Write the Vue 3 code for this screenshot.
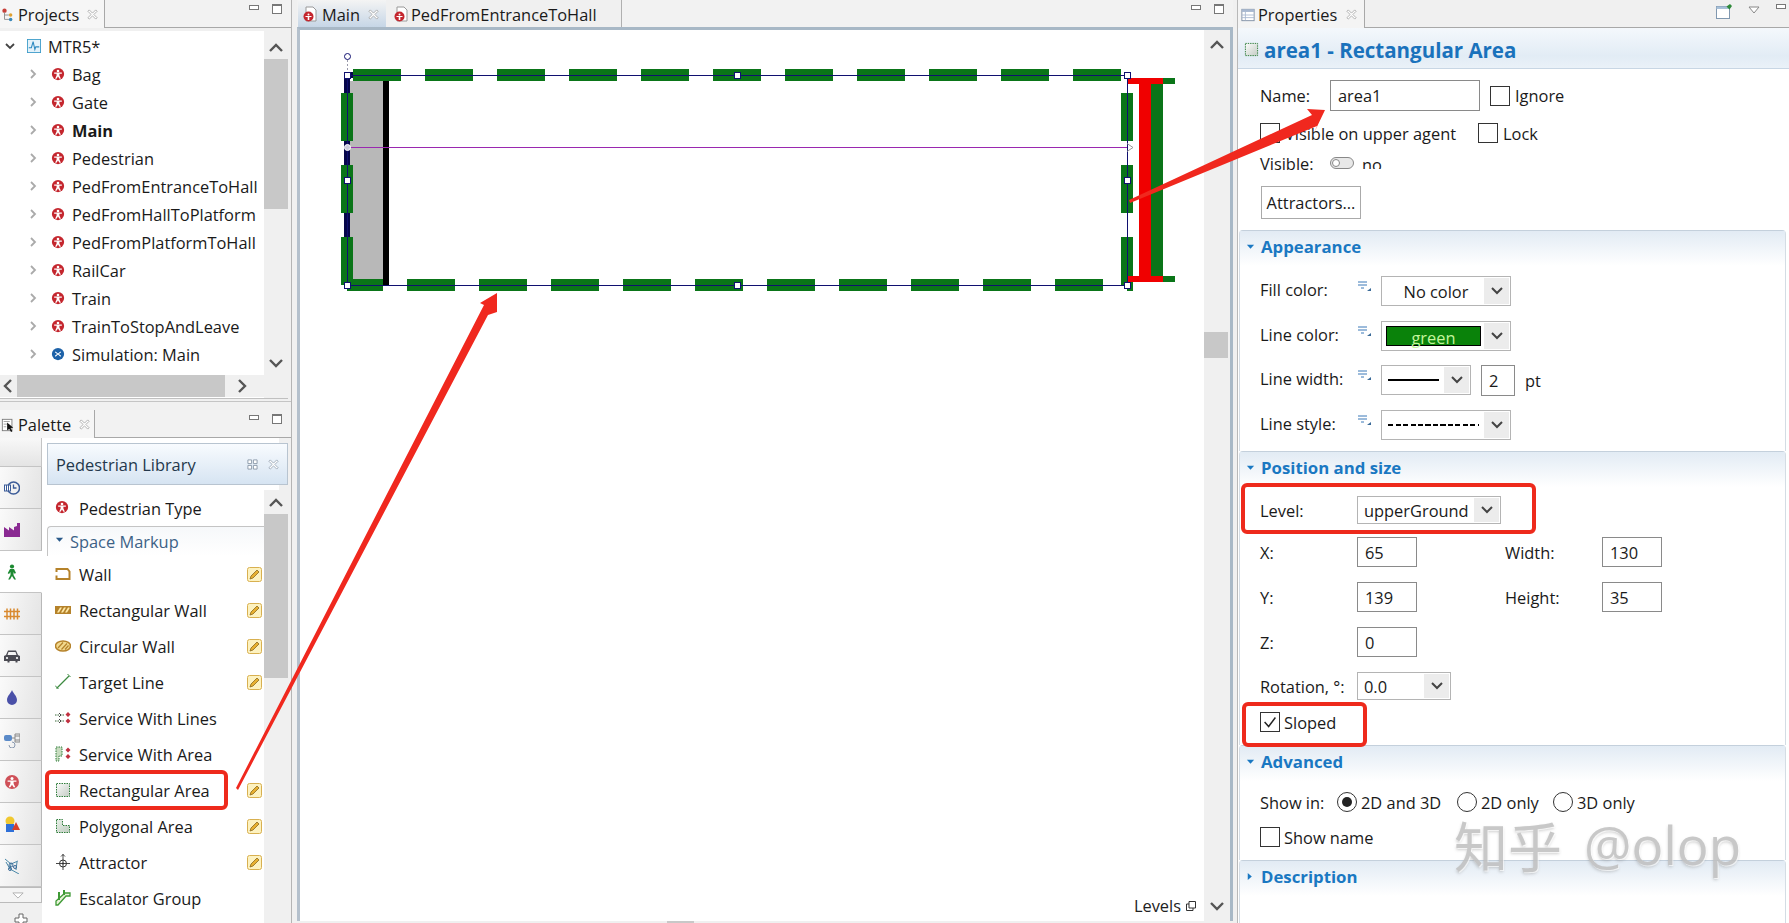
<script setup>
const agent =
  '<circle cx="8" cy="8" r="7" fill="#c4262e"/><circle cx="8" cy="4.5" r="1.5" fill="#fff"/><path d="M3.6 6.4h8.8v1.4H9.6v2l1.7 3.5H9.7L8 10.8l-1.7 2.5H4.7l1.7-3.5v-2H3.6z" fill="#fff"/>'
const sim =
  '<circle cx="8" cy="8" r="7" fill="#1d62a8"/><path d="M5.2 5l2.8 2.4L10.8 5l.8 1L9 8l2.600 2-.8 1L8 8.600 5.200 11l-.8-1L7 8 4.400 6z" fill="#fff"/>'
const areaIcon =
  '<defs><linearGradient id="ga" x1="0" y1="0" x2="1" y2="1"><stop offset="0" stop-color="#fbfbfb"/><stop offset="1" stop-color="#c4ccc4"/></linearGradient></defs><rect x="1.500" y="1.500" width="13" height="13" fill="url(#ga)" stroke="#2e7d3a" stroke-dasharray="1.500 1"/>'

const icons = {
  agent,
  sim,
  area: areaIcon,
  wall: '<path d="M1.500 6V3h11l2 2.500V13h-13V9.500" fill="none" stroke="#b5822a" stroke-width="2"/>',
  rectWall: '<rect x="0" y="4" width="16" height="8" fill="#b5822a"/><path d="M2 10.500 5 5.500h2L4 10.500zM6 10.500 9 5.500h2l-3 5zM10 10.500 13 5.500h1.500v1l-2.500 4z" fill="#ffe9a8"/>',
  circWall: '<ellipse cx="8" cy="8" rx="7.500" ry="5" fill="#f2d98e" stroke="#b5822a" stroke-width="1.500"/><path d="M3 10 8 4.500M6.500 11.500 12 5.500M10 11.500l3.500-4" stroke="#b5822a" stroke-width="1.200"/>',
  target: '<path d="M1.500 14.500 14 2" stroke="#3d8a40" stroke-width="1.300"/><path d="M0 11.500l3.500 3.500M12.500 0l3 3" stroke="#3d8a40" stroke-width="1" fill="none"/>',
  svcLines: '<path d="M0 5h10M0 11h10" stroke="#3a6a3a" stroke-dasharray="1.500 1"/><path d="M13 2l2.500 2.500L13 7l-2.500-2.500zM13 8.500l2.500 2.500-2.500 2.500-2.500-2.500z" fill="#c03040"/><path d="M4 3l2 2-2 2M4 9l2 2-2 2" stroke="#444" fill="none"/>',
  svcArea: '<path d="M1 1h6v9H4v5H1z" fill="#c8dcc0" stroke="#2e7d3a" stroke-dasharray="1.500 1"/><path d="M13 1.500l2.500 2.500L13 6.500 10.500 4zM13 8l2.500 2.500L13 13l-2.500-2.500z" fill="#c03040"/>',
  polyArea: '<defs><linearGradient id="gp" x1="0" y1="0" x2="1" y2="1"><stop offset="0" stop-color="#e8f0e8"/><stop offset="1" stop-color="#c0ccc0"/></linearGradient></defs><path d="M1.500 1.500h6v6h7v7h-13z" fill="url(#gp)" stroke="#2e7d3a" stroke-dasharray="1.500 1"/>',
  attractor: '<circle cx="8" cy="9.500" r="3.500" fill="none" stroke="#333"/><circle cx="8" cy="9.500" r="1" fill="#333"/><path d="M8 0v16M1 9.500h14M6 2.500l2-2 2 2" stroke="#333" fill="none" stroke-width=".9"/>',
  escalator: '<path d="M1 15v-4l9-8h5v3h-4l-8 9z" fill="#e8f4d8" stroke="#3f9a36" stroke-width="1.300"/><path d="M3 2h2v8H3zM8 0h2v5H8z" fill="#3f9a36"/>',
  clock: '<circle cx="9.500" cy="8" r="6" fill="none" stroke="#3c5c98" stroke-width="1.500"/><path d="M9.500 4.500V8h3" fill="none" stroke="#3c5c98" stroke-width="1.300"/><rect x=".5" y="5" width="6" height="6" fill="#fff" stroke="#3c5c98"/><path d="M2.500 5v6M4.500 5v6" stroke="#3c5c98"/>',
  factory: '<path d="M0 15V5l5 3.500V5l5 3.500V5l3-1V1h3v14z" fill="#8a2a92"/>',
  walker: '<circle cx="8" cy="2.500" r="2.100" fill="#1d8a32"/><path d="M6 5h4l2 4-1.500.7L9.500 8v3l2.500 4.500h-1.800L8 12l-2 3.500H4.200L6.500 11V8L5 10l-1.300-.8z" fill="#1d8a32"/>',
  fence: '<path d="M0 5.500h16M0 10.500h16M3 2.500v11M6.500 2.500v11M10 2.500v11M13.500 2.500v11" stroke="#d98a30" stroke-width="1.500"/>',
  car: '<path d="M0 13V8l2-1 2-4.500h8L14 7l2 1v5h-2.500v1.500h-2V13h-6v1.500h-2V13zM4.500 4 3.500 7h9l-1-3z" fill="#4a4a52" fill-rule="evenodd"/><circle cx="3" cy="10" r="1.100" fill="#fff"/><circle cx="13" cy="10" r="1.100" fill="#fff"/>',
  drop: '<path d="M8 0c1 3 5 6 5 10a5 5 0 0 1-10 0C3 6 7 3 8 0z" fill="#4a50a8"/>',
  process: '<rect x="0" y="3" width="8" height="6" rx="2" fill="#5a8ac8"/><path d="M8 6h3M11 2h5v8h-5z" stroke="#888" fill="none"/><path d="M11 4h5M11 8h5" stroke="#888"/><path d="M5 13a3 3 0 1 0 3-3" fill="none" stroke="#8a9ab0"/>',
  agentPale: '<circle cx="8" cy="8" r="7" fill="#cf5058"/><circle cx="8" cy="4.500" r="1.500" fill="#fff"/><path d="M3.600 6.400h8.800v1.400H9.600v2l1.700 3.500H9.700L8 10.800l-1.700 2.500H4.700l1.700-3.500v-2H3.600z" fill="#fff"/>',
  shapes: '<circle cx="6" cy="5" r="4.500" fill="#f0c830"/><rect x="2" y="8" width="8" height="8" fill="#2f70d8"/><path d="M8 14l4-8 4 8z" fill="#d8402a"/>',
  network: '<path d="M1 1l6 5 7-3M7 6l-1 5 9 5M6 11 2 4M12 12l1-8" stroke="#4a88a8" fill="none"/><circle cx="7" cy="7" r="2" fill="none" stroke="#3a6a98"/><circle cx="6" cy="11" r="1.500" fill="none" stroke="#3a6a98"/><circle cx="11" cy="9" r="1.500" fill="none" stroke="#3a6a98"/>',
  pencil: '<rect x=".5" y=".5" width="14" height="14" rx="2" fill="#fdf2c0" stroke="#d8b050"/><path d="M3 12l1-3 6-6 2 2-6 6z" fill="#e8b030" stroke="#8a6a20" stroke-width=".8"/>',
}

const projects = [
  { name: 'Bag', icon: 'agent' },
  { name: 'Gate', icon: 'agent' },
  { name: 'Main', icon: 'agent', bold: true },
  { name: 'Pedestrian', icon: 'agent' },
  { name: 'PedFromEntranceToHall', icon: 'agent' },
  { name: 'PedFromHallToPlatform', icon: 'agent' },
  { name: 'PedFromPlatformToHall', icon: 'agent' },
  { name: 'RailCar', icon: 'agent' },
  { name: 'Train', icon: 'agent' },
  { name: 'TrainToStopAndLeave', icon: 'agent' },
  { name: 'Simulation: Main', icon: 'sim' },
]

const strip = ['clock', 'factory', 'walker', 'fence', 'car', 'drop', 'process', 'agentPale', 'shapes', 'network']

const palette = [
  { name: 'Wall', icon: 'wall', edit: true },
  { name: 'Rectangular Wall', icon: 'rectWall', edit: true },
  { name: 'Circular Wall', icon: 'circWall', edit: true },
  { name: 'Target Line', icon: 'target', edit: true },
  { name: 'Service With Lines', icon: 'svcLines' },
  { name: 'Service With Area', icon: 'svcArea' },
  { name: 'Rectangular Area', icon: 'area', edit: true },
  { name: 'Polygonal Area', icon: 'polyArea', edit: true },
  { name: 'Attractor', icon: 'attractor', edit: true },
  { name: 'Escalator Group', icon: 'escalator' },
]

// green dashes of the selected area
const topDashes = Array.from({ length: 11 }, (_, i) => 353 + i * 72)
const bottomDashes = Array.from({ length: 10 }, (_, i) => 407 + i * 72)
const sideDashes = [93, 165, 237]
const handles = [
  [347, 75], [737, 75], [1127, 75],
  [347, 180], [1127, 180],
  [347, 285], [737, 285], [1127, 285],
]
</script>

<template>
  <div class="app">
    <!-- left column -->
    <div class="left">
      <div class="view projects">
        <div class="tabbar">
          <div class="tab">
            <svg class="tab-icon" viewBox="0 0 16 16">
              <circle cx="4" cy="3" r="2.500" fill="#c8403a" />
              <path d="M4 5v8h5M4 8h5" stroke="#888" fill="none" />
              <circle cx="11" cy="8" r="2" fill="#e0a030" />
              <circle cx="11" cy="13" r="2" fill="#3a88b8" />
            </svg>
            <span>Projects</span>
            <svg class="close" viewBox="0 0 12 12"><path d="M1 2.500 2.500 1 6 4.500 9.500 1 11 2.500 7.500 6 11 9.500 9.500 11 6 7.500 2.500 11 1 9.500 4.500 6 1 2.500z" fill="#fff" stroke="#999" stroke-width=".8" /></svg>
          </div>
          <div class="win-btns">
            <span class="win-min"></span>
            <span class="win-max"></span>
          </div>
        </div>
        <div class="tree">
          <div class="tree-main">
            <div class="tree-rows">
              <div class="tree-row root">
                <svg class="chev-small" viewBox="0 0 10 10"><path d="M1 3l4 4 4-4" fill="none" stroke="#444" stroke-width="1.800" /></svg>
                <svg class="item-icon" viewBox="0 0 16 16">
                  <rect x=".5" y=".5" width="15" height="15" fill="#e4f2fa" stroke="#3a9ac8" />
                  <path d="M2 10h3l2-7 2 9 1-3h4" fill="none" stroke="#2a88c0" stroke-width="1.200" />
                </svg>
                <span>MTR5*</span>
              </div>
              <div v-for="p in projects" :key="p.name" class="tree-row" :class="{ bold: p.bold }">
                <svg class="chev-small" viewBox="0 0 10 10"><path d="M3 1l4 4-4 4" fill="none" stroke="#aaa" stroke-width="1.800" /></svg>
                <svg class="item-icon" viewBox="0 0 16 16" v-html="icons[p.icon]"></svg>
                <span>{{ p.name }}</span>
              </div>
            </div>
            <div class="hbar">
              <svg class="bar-arrow" viewBox="0 0 16 16"><path d="M11 2 5 8l6 6" fill="none" stroke="#555" stroke-width="2.400" /></svg>
              <div class="hbar-thumb"></div>
              <svg class="bar-arrow" viewBox="0 0 16 16"><path d="M5 2l6 6-6 6" fill="none" stroke="#555" stroke-width="2.400" /></svg>
            </div>
          </div>
          <div class="vbar tree-vbar">
            <svg class="bar-arrow up" viewBox="0 0 16 16"><path d="M2 11l6-6 6 6" fill="none" stroke="#555" stroke-width="2.400" /></svg>
            <div class="vbar-thumb tree-thumb"></div>
            <svg class="bar-arrow down" viewBox="0 0 16 16"><path d="M2 5l6 6 6-6" fill="none" stroke="#555" stroke-width="2.400" /></svg>
          </div>
        </div>
      </div>

      <div class="view palette">
        <div class="tabbar">
          <div class="tab palette-tab">
            <svg class="tab-icon" viewBox="0 0 16 16">
              <rect x="1.500" y="1.500" width="11" height="13" fill="#fff" stroke="#777" />
              <path d="M3 4h7M3 7h4M3 10h3" stroke="#999" />
              <path d="M7 5l7 6-3 .5 2 3.500-1.500 1-2-3.500L7 14z" fill="#111" />
            </svg>
            <span>Palette</span>
            <svg class="close" viewBox="0 0 12 12"><path d="M1 2.500 2.500 1 6 4.500 9.500 1 11 2.500 7.500 6 11 9.500 9.500 11 6 7.500 2.500 11 1 9.500 4.500 6 1 2.500z" fill="#fff" stroke="#999" stroke-width=".8" /></svg>
          </div>
          <div class="win-btns">
            <span class="win-min"></span>
            <span class="win-max"></span>
          </div>
        </div>
        <div class="palette-body">
          <div class="strip">
            <div class="strip-top"></div>
            <div v-for="s in strip" :key="s" class="strip-btn" :class="{ active: s === 'walker' }">
              <svg class="strip-icon" viewBox="0 0 16 16" v-html="icons[s]"></svg>
            </div>
            <div class="strip-scroll">
              <svg class="strip-tri" viewBox="0 0 14 8"><path d="M1 1h12L7 7z" fill="#fff" stroke="#aaa" /></svg>
            </div>
            <svg class="strip-plus" viewBox="0 0 14 14"><path d="M5 1h4v4h4v4H9v4H5V9H1V5h4z" fill="#fff" stroke="#666" /></svg>
          </div>
          <div class="palette-main">
            <div class="lib-head">
              <span>Pedestrian Library</span>
              <div class="lib-tools">
                <svg class="lib-grid" viewBox="0 0 12 12"><path d="M1 1h4v4H1zM7 1h4v4H7zM1 7h4v4H1zM7 7h4v4H7z" fill="#fff" stroke="#8a98a8" /></svg>
                <svg class="close lib-close" viewBox="0 0 12 12"><path d="M1 2.500 2.500 1 6 4.500 9.500 1 11 2.500 7.500 6 11 9.500 9.500 11 6 7.500 2.500 11 1 9.500 4.500 6 1 2.500z" fill="#fff" stroke="#8a98a8" stroke-width=".8" /></svg>
              </div>
            </div>
            <div class="palette-scroll">
              <div class="palette-list">
                <div class="pal-row first">
                  <svg class="item-icon ped-icon" viewBox="0 0 16 16" v-html="icons.agent"></svg>
                  <span>Pedestrian Type</span>
                </div>
                <div class="drawer">
                  <svg class="drawer-tri" viewBox="0 0 10 6"><path d="M1 .5h8L5 5z" fill="#2a5a8a" /></svg>
                  <span>Space Markup</span>
                </div>
                <div v-for="item in palette" :key="item.name" class="pal-row">
                  <svg class="item-icon" viewBox="0 0 16 16" v-html="icons[item.icon]"></svg>
                  <span>{{ item.name }}</span>
                  <svg v-if="item.edit" class="pencil" viewBox="0 0 15 15" v-html="icons.pencil"></svg>
                </div>
              </div>
              <div class="vbar pal-vbar">
                <svg class="bar-arrow up" viewBox="0 0 16 16"><path d="M2 11l6-6 6 6" fill="none" stroke="#555" stroke-width="2.400" /></svg>
                <div class="vbar-thumb pal-thumb"></div>
              </div>
            </div>
          </div>
        </div>
      </div>
    </div>

    <!-- editor -->
    <div class="editor">
      <div class="tabbar editor-tabs">
        <div class="ed-tab active">
          <svg class="doc-icon" viewBox="0 0 16 16">
            <path d="M4 1h7l3 3v11H4z" fill="#fff" stroke="#999" />
            <circle cx="6.500" cy="10.500" r="5" fill="#c4262e" />
            <circle cx="6.500" cy="8.500" r="1" fill="#fff" />
            <path d="M3.500 10h6v1H7.300v3H5.700v-3H3.500z" fill="#fff" />
          </svg>
          <span>Main</span>
          <svg class="close" viewBox="0 0 12 12"><path d="M1 2.500 2.500 1 6 4.500 9.500 1 11 2.500 7.500 6 11 9.500 9.500 11 6 7.500 2.500 11 1 9.500 4.500 6 1 2.500z" fill="#fff" stroke="#999" stroke-width=".8" /></svg>
        </div>
        <div class="ed-tab second">
          <svg class="doc-icon" viewBox="0 0 16 16">
            <path d="M4 1h7l3 3v11H4z" fill="#fff" stroke="#999" />
            <circle cx="6.500" cy="10.500" r="5" fill="#c4262e" />
            <circle cx="6.500" cy="8.500" r="1" fill="#fff" />
            <path d="M3.500 10h6v1H7.300v3H5.700v-3H3.500z" fill="#fff" />
          </svg>
          <span>PedFromEntranceToHall</span>
        </div>
        <div class="win-btns">
          <span class="win-min"></span>
          <span class="win-max"></span>
        </div>
      </div>
      <div class="editor-body">
        <div class="canvas">
          <svg class="diagram" viewBox="300 30 904 891">
            <rect x="350" y="81" width="33" height="198" fill="#b8b8b8" />
            <rect x="383" y="81" width="6" height="204" fill="#000" />
            <rect x="344" y="72" width="6" height="213" fill="#06064a" />
            <rect x="344" y="72" width="10" height="6" fill="#06064a" />
            <rect v-for="x in topDashes" :key="'t' + x" :x="x" y="69" width="48" height="12" fill="#0a7518" />
            <rect x="347" y="279" width="36" height="12" fill="#0a7518" />
            <rect v-for="x in bottomDashes" :key="'b' + x" :x="x" y="279" width="48" height="12" fill="#0a7518" />
            <rect x="1127" y="279" width="6" height="12" fill="#0a7518" />
            <rect v-for="y in sideDashes" :key="'l' + y" x="341" :y="y" width="12" height="48" fill="#0a7518" />
            <rect v-for="y in sideDashes" :key="'r' + y" x="1121" :y="y" width="12" height="48" fill="#0a7518" />
            <rect x="1151" y="78" width="12" height="204" fill="#0a7518" />
            <rect x="1163" y="78" width="12" height="6" fill="#0a7518" />
            <rect x="1163" y="276" width="12" height="6" fill="#0a7518" />
            <rect x="1139" y="78" width="12" height="204" fill="#f00000" />
            <rect x="1127" y="78" width="36" height="6" fill="#f00000" />
            <rect x="1127" y="276" width="36" height="6" fill="#f00000" />
            <path d="M347.500 75.500H1127.500V285.500H347.500Z" fill="none" stroke="#101070" stroke-width="1" />
            <path d="M350 147.500H1127" stroke="#9a28b0" stroke-width="1" />
            <path d="M1127 143.500l6 4-6 4" fill="none" stroke="#999" />
            <path d="M347.500 60V72" stroke="#99a" stroke-dasharray="2 2" />
            <circle cx="347.500" cy="56.500" r="3" fill="#fff" stroke="#101070" />
            <circle cx="347.500" cy="147.500" r="3" fill="#ccd" stroke="#fff" />
            <rect v-for="h in handles" :key="h[0] + '-' + h[1]" :x="h[0] - 2.500" :y="h[1] - 2.500" width="6" height="6" fill="#fff" stroke="#101070" />
          </svg>
          <div class="levels">
            <span>Levels</span>
            <svg class="levels-icon" viewBox="0 0 10 10"><path d="M3 .5h6.500V7H3zM.5 3H3M.5 3v6.500H7V7" fill="#fff" stroke="#333" /></svg>
          </div>
        </div>
        <div class="vbar editor-vbar">
          <svg class="bar-arrow up" viewBox="0 0 16 16"><path d="M2 11l6-6 6 6" fill="none" stroke="#555" stroke-width="2.400" /></svg>
          <div class="vbar-thumb editor-thumb"></div>
          <svg class="bar-arrow down" viewBox="0 0 16 16"><path d="M2 5l6 6 6-6" fill="none" stroke="#555" stroke-width="2.400" /></svg>
        </div>
      </div>
      <div class="editor-hbar"><div class="editor-hthumb"></div></div>
    </div>

    <!-- properties -->
    <div class="props">
      <div class="tabbar">
        <div class="tab props-tab">
          <svg class="tab-icon" viewBox="0 0 16 16">
            <rect x="1" y="1.500" width="14" height="13" fill="#fff" stroke="#7a8aa0" />
            <rect x="1" y="1.500" width="14" height="3" fill="#a8b8d0" />
            <path d="M1 8h14M1 11h14M5 4v10" stroke="#a8b8d0" />
          </svg>
          <span>Properties</span>
          <svg class="close" viewBox="0 0 12 12"><path d="M1 2.500 2.500 1 6 4.500 9.500 1 11 2.500 7.500 6 11 9.500 9.500 11 6 7.500 2.500 11 1 9.500 4.500 6 1 2.500z" fill="#fff" stroke="#999" stroke-width=".8" /></svg>
        </div>
        <div class="props-tools">
          <svg class="pin" viewBox="0 0 16 16">
            <rect x=".5" y="3.500" width="13" height="12" fill="#fff" stroke="#8098b0" />
            <rect x=".5" y="3.500" width="13" height="2.500" fill="#a8c0d8" />
            <path d="M9 9l3-4-1.500-1.500L14 1l2 2-2.500 3.500L12 5z" fill="#2e8a3a" />
          </svg>
          <svg class="tri" viewBox="0 0 12 8"><path d="M1 1h10L6 7z" fill="#fff" stroke="#888" /></svg>
          <span class="win-min"></span>
        </div>
      </div>

      <div class="props-head">
        <svg class="head-icon" viewBox="0 0 16 16" v-html="icons.area"></svg>
        <span>area1 - Rectangular Area</span>
      </div>

      <div class="general">
        <div class="row name-row">
          <label class="lbl name-lbl">Name:</label>
          <div class="input name-input">area1</div>
          <span class="check ignore"></span>
          <span>Ignore</span>
        </div>
        <div class="row check-row">
          <span class="check"></span>
          <span class="vis-text">Visible on upper agent</span>
          <span class="check"></span>
          <span>Lock</span>
        </div>
        <div class="row visible-row">
          <label class="lbl name-lbl">Visible:</label>
          <span class="toggle"><i></i></span>
          <span class="clipped"><span>no</span></span>
        </div>
        <button class="btn">Attractors...</button>
      </div>

      <section class="sec appearance">
        <h3><svg class="sec-tri" viewBox="0 0 10 6"><path d="M1 .5h8L5 5z" fill="#1a78c2" /></svg>Appearance</h3>
        <div class="sec-body">
          <div class="row field">
            <label class="lbl">Fill color:</label>
            <svg class="mini" viewBox="0 0 14 11"><path d="M0 1h9M0 4h9M3 7h3" stroke="#3a78b8" /><path d="M9 10l4-3v3z" fill="#3a6a98" /></svg>
            <div class="combo wide"><span class="combo-val center">No color</span><span class="combo-btn"><svg viewBox="0 0 12 10"><path d="M1 2l5 5 5-5" fill="none" stroke="#444" stroke-width="2" /></svg></span></div>
          </div>
          <div class="row field">
            <label class="lbl">Line color:</label>
            <svg class="mini" viewBox="0 0 14 11"><path d="M0 1h9M0 4h9M3 7h3" stroke="#3a78b8" /><path d="M9 10l4-3v3z" fill="#3a6a98" /></svg>
            <div class="combo wide"><span class="swatch">green</span><span class="combo-btn"><svg viewBox="0 0 12 10"><path d="M1 2l5 5 5-5" fill="none" stroke="#444" stroke-width="2" /></svg></span></div>
          </div>
          <div class="row field">
            <label class="lbl">Line width:</label>
            <svg class="mini" viewBox="0 0 14 11"><path d="M0 1h9M0 4h9M3 7h3" stroke="#3a78b8" /><path d="M9 10l4-3v3z" fill="#3a6a98" /></svg>
            <div class="combo narrow"><span class="solid-line"></span><span class="combo-btn"><svg viewBox="0 0 12 10"><path d="M1 2l5 5 5-5" fill="none" stroke="#444" stroke-width="2" /></svg></span></div>
            <div class="input width-input">2</div>
            <span class="pt">pt</span>
          </div>
          <div class="row field">
            <label class="lbl">Line style:</label>
            <svg class="mini" viewBox="0 0 14 11"><path d="M0 1h9M0 4h9M3 7h3" stroke="#3a78b8" /><path d="M9 10l4-3v3z" fill="#3a6a98" /></svg>
            <div class="combo wide"><span class="dash-line"></span><span class="combo-btn"><svg viewBox="0 0 12 10"><path d="M1 2l5 5 5-5" fill="none" stroke="#444" stroke-width="2" /></svg></span></div>
          </div>
        </div>
      </section>

      <section class="sec position">
        <h3><svg class="sec-tri" viewBox="0 0 10 6"><path d="M1 .5h8L5 5z" fill="#1a78c2" /></svg>Position and size</h3>
        <div class="sec-body">
          <div class="row pos-row level-row">
            <label class="lbl">Level:</label>
            <div class="combo level"><span class="combo-val">upperGround</span><span class="combo-btn"><svg viewBox="0 0 12 10"><path d="M1 2l5 5 5-5" fill="none" stroke="#444" stroke-width="2" /></svg></span></div>
          </div>
          <div class="row pos-row">
            <label class="lbl">X:</label>
            <div class="input num">65</div>
            <label class="lbl second-lbl">Width:</label>
            <div class="input num">130</div>
          </div>
          <div class="row pos-row">
            <label class="lbl">Y:</label>
            <div class="input num">139</div>
            <label class="lbl second-lbl">Height:</label>
            <div class="input num">35</div>
          </div>
          <div class="row pos-row">
            <label class="lbl">Z:</label>
            <div class="input num">0</div>
          </div>
          <div class="row pos-row rot-row">
            <label class="lbl">Rotation, °:</label>
            <div class="combo rot"><span class="combo-val">0.0</span><span class="combo-btn"><svg viewBox="0 0 12 10"><path d="M1 2l5 5 5-5" fill="none" stroke="#444" stroke-width="2" /></svg></span></div>
          </div>
          <div class="row sloped-row">
            <span class="check checked"><svg viewBox="0 0 20 20"><path d="M4 10l4.500 5L16 5" fill="none" stroke="#222" stroke-width="1.600" /></svg></span>
            <span>Sloped</span>
          </div>
        </div>
      </section>

      <section class="sec advanced">
        <h3><svg class="sec-tri" viewBox="0 0 10 6"><path d="M1 .5h8L5 5z" fill="#1a78c2" /></svg>Advanced</h3>
        <div class="sec-body">
          <div class="row show-row">
            <label class="show-lbl">Show in:</label>
            <span class="radio on"></span><span class="radio-text r-first">2D and 3D</span>
            <span class="radio"></span><span class="radio-text r-second">2D only</span>
            <span class="radio"></span><span class="radio-text">3D only</span>
          </div>
          <div class="row showname-row">
            <span class="check"></span>
            <span>Show name</span>
          </div>
        </div>
      </section>

      <section class="sec description">
        <h3><svg class="sec-tri side" viewBox="0 0 6 10"><path d="M.5 1v8L5 5z" fill="#1a78c2" /></svg>Description</h3>
      </section>
    </div>

    <!-- annotations drawn over the screenshot -->
    <svg class="marks" viewBox="0 0 1789 923">
      <rect x="47" y="772" width="179" height="36" rx="4" class="mark-box" />
      <rect x="1243" y="485" width="291" height="47" rx="4" class="mark-box" />
      <rect x="1244" y="704" width="121" height="41" rx="4" class="mark-box" />
      <path d="M236 788 238 790 488 315 497 312 497 293 480 303 484 305Z" fill="#f0281e" />
      <path d="M1129 200 1130 203 1317 126 1314 133 1325 110 1307 109 1312 115Z" fill="#f0281e" />
    </svg>
    <div class="watermark"><span class="wm-cn">知乎</span><span class="wm-en">@olop</span></div>
  </div>
</template>

<style>
html,
body {
  margin: 0;
  padding: 0;
  overflow: hidden;
}
</style>

<style scoped>
.app {
  position: relative;
  display: flex;
  width: 1789px;
  height: 923px;
  overflow: hidden;
  background: #f0f0f0;
  color: #1a1a1a;
  font-family: "Open Sans", "Noto Sans", sans-serif;
  font-size: 16.400px;
}

/* shared bits */
.tabbar {
  display: flex;
  height: 28px;
  flex: none;
  box-sizing: border-box;
  border-bottom: 1px solid #a8a8a8;
  background: #f2f2f2;
}
.tab {
  display: flex;
  align-items: center;
  box-sizing: border-box;
  width: 105px;
  height: 28px;
  padding: 1px 0 0 1px;
  border-right: 1px solid #a8a8a8;
  background: #f6f6f6;
}
.tab-icon {
  width: 14px;
  height: 14px;
  margin-right: 3px;
  flex: none;
}
.close {
  width: 11px;
  height: 11px;
  margin-left: 8px;
  flex: none;
}
.win-btns {
  display: flex;
  align-items: flex-start;
  gap: 13px;
  margin-left: auto;
  padding: 4px 9px 0 0;
}
.win-min {
  display: block;
  box-sizing: border-box;
  width: 10px;
  height: 5px;
  margin-top: 1px;
  border: 1px solid #777;
  background: #fff;
}
.win-max {
  display: block;
  box-sizing: border-box;
  width: 10px;
  height: 10px;
  border: 1px solid #777;
  border-top-width: 2px;
  background: #fff;
}
.item-icon {
  width: 14px;
  height: 14px;
  flex: none;
}
.bar-arrow {
  width: 16px;
  height: 16px;
  flex: none;
}
.vbar {
  display: flex;
  flex-direction: column;
  align-items: center;
  flex: none;
  width: 24px;
  background: #f0f0f0;
}
.vbar-thumb {
  width: 24px;
  background: #c8c8c8;
}

/* left column */
.left {
  display: flex;
  flex-direction: column;
  flex: none;
  width: 292px;
  box-sizing: border-box;
  border-right: 1px solid #b4b4b4;
}
.projects {
  height: 402px;
  flex: none;
  border-bottom: 1px solid #c4c4c4;
  box-sizing: border-box;
}
.tree {
  display: flex;
  box-sizing: border-box;
  width: 288px;
  height: 368px;
  margin-top: 3px;
  background: #fff;
  border-bottom: 1px solid #c0c0c0;
}
.tree-main {
  display: flex;
  flex-direction: column;
  flex: 1;
  min-width: 0;
}
.tree-rows {
  flex: 1;
  padding-top: 1px;
}
.tree-row {
  display: flex;
  align-items: center;
  height: 28px;
  padding-left: 28px;
  white-space: nowrap;
}
.tree-row .chev-small {
  width: 10px;
  height: 10px;
  margin-right: 13px;
  flex: none;
}
.tree-row .item-icon {
  margin-right: 7px;
}
.tree-row.root {
  padding-left: 5px;
}
.tree-row.root .chev-small {
  margin-right: 12px;
}
.tree-row.bold span {
  font-weight: 700;
}
.hbar {
  display: flex;
  align-items: center;
  height: 22px;
  flex: none;
  background: #f0f0f0;
  margin-bottom: 1px;
}
.hbar-thumb {
  width: 208px;
  height: 22px;
  margin: 0 9px 0 1px;
  background: #c8c8c8;
}
.tree-vbar {
  height: 367px;
  padding-top: 9px;
  box-sizing: border-box;
}
.tree-thumb {
  height: 150px;
  margin-top: 3px;
}
.tree-vbar .down {
  margin-top: auto;
  margin-bottom: 27px;
}

/* palette */
.palette {
  display: flex;
  flex-direction: column;
  flex: 1;
  min-height: 0;
  padding-top: 8px;
}
.palette-tab {
  width: 95px;
}
.palette-body {
  display: flex;
  flex: 1;
  min-height: 0;
}
.strip {
  flex: none;
  width: 42px;
}
.strip-top {
  height: 29px;
  box-sizing: border-box;
  background: linear-gradient(#f8f8f8, #e4e4e4);
  border: 1px solid #c4c4c4;
  border-width: 0 1px 1px 0;
}
.strip-btn {
  display: flex;
  align-items: center;
  justify-content: center;
  box-sizing: border-box;
  height: 42px;
  background: linear-gradient(100deg, #fafafa, #e4e4e4);
  border-right: 1px solid #b8b8b8;
  border-bottom: 1px solid #c4c4c4;
  padding-right: 18px;
}
.strip-btn.active {
  background: #fff;
  border-right-color: transparent;
}
.strip-icon {
  width: 16px;
  height: 16px;
}
.strip-scroll {
  display: flex;
  align-items: center;
  justify-content: center;
  height: 16px;
  padding-right: 6px;
  box-sizing: border-box;
  border: 1px solid #bbb;
  border-width: 1px 1px 1px 0;
  background: #f4f4f4;
}
.strip-tri {
  width: 12px;
  height: 7px;
}
.strip-plus {
  display: block;
  width: 14px;
  height: 14px;
  margin: 10px 0 0 14px;
}
.palette-main {
  display: flex;
  flex-direction: column;
  flex: 1;
  min-width: 0;
  padding: 5px 3px 0 5px;
  background: linear-gradient(90deg, #fff, #fff 95%, #f0f0f0 95%);
}
.lib-head {
  display: flex;
  align-items: center;
  flex: none;
  box-sizing: border-box;
  height: 42px;
  padding-left: 8px;
  border: 1px solid #b8c4d0;
  background: linear-gradient(#f8fbfe, #d6e4f2);
  color: #24384c;
}
.lib-tools {
  display: flex;
  align-items: center;
  margin-left: auto;
  padding-right: 8px;
}
.lib-grid {
  width: 11px;
  height: 11px;
}
.lib-close {
  margin-left: 10px;
}
.palette-scroll {
  display: flex;
  flex: 1;
  min-height: 0;
  margin-top: 5px;
}
.palette-list {
  flex: 1;
  min-width: 0;
}
.pal-row {
  display: flex;
  align-items: center;
  height: 36px;
  padding-left: 8px;
  white-space: nowrap;
}
.pal-row .item-icon {
  width: 16px;
  height: 16px;
  margin-right: 8px;
}
.pal-row .ped-icon {
  width: 14px;
  height: 14px;
  margin: -3px 10px 0 0;
}
.pencil {
  width: 15px;
  height: 15px;
  margin-left: auto;
  margin-right: 2px;
}
.drawer {
  display: flex;
  align-items: center;
  box-sizing: border-box;
  height: 30px;
  padding-left: 7px;
  border: 1px solid #c4c4c4;
  border-width: 1px 0 0 1px;
  border-top-left-radius: 4px;
  background: linear-gradient(#f6f8fa, #fff);
  color: #3d6286;
}
.drawer-tri {
  width: 9px;
  height: 6px;
  margin-right: 6px;
  margin-top: -4px;
}
.pal-vbar {
  height: 434px;
  padding-top: 5px;
  box-sizing: border-box;
}
.pal-thumb {
  height: 164px;
  margin-top: 3px;
}

/* editor */
.editor {
  display: flex;
  flex-direction: column;
  flex: none;
  width: 936px;
  margin-left: 5px;
  box-sizing: border-box;
}
.editor-tabs {
  height: 27px;
  border: none;
}
.ed-tab {
  display: flex;
  align-items: center;
  box-sizing: border-box;
  height: 27px;
  padding: 1px 0 0 4px;
}
.ed-tab.active {
  width: 88px;
  margin-left: 1px;
  background: linear-gradient(#f4f4f4, #c6d6e6);
}
.ed-tab.second {
  width: 236px;
  border-right: 1px solid #b0b0b0;
  padding-left: 7px;
  background: #f0f0f0;
}
.ed-tab.second .doc-icon {
  margin-right: 2px;
}
.doc-icon {
  width: 16px;
  height: 16px;
  margin-right: 4px;
  flex: none;
}
.editor-body {
  display: flex;
  flex: 1;
  min-height: 0;
  box-sizing: border-box;
  border-top: 3px solid #a8b8c6;
  border-left: 3px solid #b4c0cc;
  border-right: 3px solid #a8b8c6;
}
.canvas {
  position: relative;
  flex: 1;
  min-width: 0;
  background: #fff;
}
.diagram {
  display: block;
  width: 904px;
  height: 891px;
}
.levels {
  position: absolute;
  right: 8px;
  bottom: 4px;
  display: flex;
  align-items: center;
  gap: 5px;
  color: #222;
}
.levels-icon {
  width: 10px;
  height: 10px;
}
.editor-vbar {
  width: 26px;
  padding-top: 7px;
  box-sizing: border-box;
}
.editor-thumb {
  height: 26px;
  margin-top: 285px;
  align-self: flex-start;
}
.editor-vbar .up {
  margin-bottom: -6px;
}
.editor-vbar .down {
  margin-top: auto;
  margin-bottom: 7px;
}
.editor-hbar {
  height: 2px;
  flex: none;
  background: #f0f0f0;
}
.editor-hthumb {
  width: 27px;
  height: 2px;
  margin-left: 370px;
  background: #c8c8c8;
}

/* properties */
.props {
  display: flex;
  flex-direction: column;
  flex: 1;
  min-width: 0;
  margin-left: 4px;
  border-left: 1px solid #b8b8b8;
  background: #fff;
}
.props .tabbar {
  background: #f0f0f0;
}
.props-tab {
  width: 127px;
  padding-left: 3px;
  background: #f4f4f4;
}
.props-tab .close {
  margin-left: 9px;
}
.props-tools {
  display: flex;
  align-items: flex-start;
  gap: 16px;
  margin-left: auto;
  padding: 3px 3px 0 0;
}
.pin {
  width: 16px;
  height: 16px;
}
.tri {
  width: 12px;
  height: 8px;
  margin-top: 3px;
}
.props-head {
  display: flex;
  align-items: center;
  flex: none;
  box-sizing: border-box;
  height: 41px;
  padding: 3px 0 0 6px;
  border-bottom: 1px solid #c8d6e4;
  background: linear-gradient(#f4f8fc, #e2ecf5 70%, #eaf1f8);
  color: #1a72bc;
  font-size: 20.500px;
  font-weight: 700;
}
.head-icon {
  width: 15px;
  height: 15px;
  margin-right: 5px;
}
.general {
  height: 161px;
  padding: 11px 0 0 22px;
  box-sizing: border-box;
}
.row {
  display: flex;
  align-items: center;
  white-space: nowrap;
}
.lbl {
  flex: none;
}
.name-row {
  height: 31px;
}
.name-lbl {
  width: 70px;
}
.input {
  display: flex;
  align-items: center;
  box-sizing: border-box;
  flex: none;
  height: 31px;
  border: 1px solid #8a8a8a;
  background: #fff;
}
.name-input {
  width: 150px;
  padding-left: 7px;
}
.check {
  display: block;
  flex: none;
  box-sizing: border-box;
  width: 20px;
  height: 20px;
  margin-right: 5px;
  border: 1px solid #333;
  background: #fff;
}
.ignore {
  margin-left: 10px;
}
.check-row {
  height: 20px;
  margin-top: 12px;
}
.vis-text {
  width: 193px;
}
.visible-row {
  height: 20px;
  margin-top: 10px;
}
.toggle {
  position: relative;
  display: block;
  box-sizing: border-box;
  width: 24px;
  height: 12px;
  border: 1px solid #888;
  border-radius: 6px;
  background: #e8e8e8;
  margin-right: 8px;
}
.toggle i {
  position: absolute;
  left: 1px;
  top: 1px;
  width: 8px;
  height: 8px;
  border: 1px solid #888;
  border-radius: 50%;
  box-sizing: border-box;
  background: #fff;
}
.clipped {
  display: block;
  height: 11px;
  margin-top: 1px;
  overflow: hidden;
  line-height: 11px;
}
.clipped span {
  position: relative;
  top: 1px;
}
.btn {
  display: block;
  box-sizing: border-box;
  width: 100px;
  height: 33px;
  margin: 13px 0 0 1px;
  padding: 0;
  border: 1px solid #aaa;
  background: #fff;
  font: inherit;
  color: inherit;
}

.sec {
  flex: none;
  box-sizing: border-box;
  margin: 0 3px 0 1px;
  border-top: 1px solid #c4d0dc;
  border-left: 1px solid #d4dce4;
  border-right: 1px solid #d4dce4;
  border-radius: 4px 4px 0 0;
}
.sec h3 {
  display: flex;
  align-items: center;
  height: 35px;
  margin: 0;
  padding: 0 0 4px 6px;
  background: linear-gradient(#e2ebf4, #fff);
  color: #1a78c2;
  font-size: 16.800px;
  font-weight: 700;
  box-sizing: border-box;
}
.sec-tri {
  width: 9px;
  height: 6px;
  margin-right: 6px;
}
.sec-tri.side {
  width: 6px;
  height: 9px;
  margin: 0 8px 0 1px;
}
.sec-body {
  padding-left: 20px;
}
.appearance {
  height: 221px;
}
.appearance .sec-body {
  display: flex;
  flex-direction: column;
  gap: 14.500px;
  padding-top: 10px;
}
.field {
  height: 30px;
}
.field .lbl {
  width: 97px;
  margin-top: -3px;
}
.mini {
  width: 14px;
  height: 11px;
  margin: -9px 9px 0 1px;
  flex: none;
}
.combo {
  display: flex;
  align-items: stretch;
  box-sizing: border-box;
  flex: none;
  height: 30px;
  padding: 1px;
  border: 1px solid #b4b4b4;
  background: #fff;
}
.combo.wide {
  width: 130px;
}
.combo.narrow {
  width: 90px;
}
.combo.level {
  width: 144px;
  height: 28px;
}
.combo.rot {
  width: 94px;
  height: 28px;
}
.combo-val {
  flex: 1;
  align-self: center;
  padding-left: 5px;
}
.combo-val.center {
  text-align: center;
}
.combo-btn {
  display: flex;
  align-items: center;
  justify-content: center;
  flex: none;
  width: 25px;
  background: #ececec;
}
.combo-btn svg {
  width: 12px;
  height: 10px;
}
.swatch {
  flex: 1;
  margin: 3px;
  box-sizing: border-box;
  border: 1px solid #000;
  background: #0a820a;
  color: #c4f59c;
  text-align: center;
  line-height: 21px;
}
.solid-line {
  flex: 1;
  align-self: center;
  height: 2px;
  margin: 0 5px;
  background: #000;
}
.dash-line {
  flex: 1;
  align-self: center;
  height: 2px;
  margin: 0 5px;
  background: repeating-linear-gradient(90deg, #000 0 5px, transparent 5px 7.500px);
}
.width-input {
  width: 34px;
  height: 31px;
  margin-left: 10px;
  padding-left: 7px;
}
.pt {
  margin-left: 10px;
}
.position {
  height: 294px;
}
.position .sec-body {
  display: flex;
  flex-direction: column;
  gap: 15px;
  padding-top: 9px;
}
.pos-row {
  height: 30px;
}
.pos-row .lbl {
  width: 97px;
}
.level-row {
  height: 28px;
  margin-bottom: -2px;
}
.num {
  width: 60px;
  height: 30px;
  padding-left: 7px;
}
.pos-row .second-lbl {
  width: 97px;
  margin-left: 88px;
}
.rot-row {
  height: 28px;
}
.sloped-row {
  height: 20px;
  margin-top: -3px;
}
.sloped-row .check {
  margin-right: 4px;
}
.check.checked svg {
  display: block;
  width: 18px;
  height: 18px;
}
.advanced {
  height: 115px;
}
.advanced .sec-body {
  padding-top: 11px;
}
.show-row {
  height: 20px;
}
.show-lbl {
  width: 77px;
}
.radio {
  display: block;
  position: relative;
  flex: none;
  box-sizing: border-box;
  width: 20px;
  height: 20px;
  border: 1px solid #333;
  border-radius: 50%;
  margin-right: 4px;
}
.radio.on::after {
  content: "";
  position: absolute;
  left: 4px;
  top: 4px;
  width: 10px;
  height: 10px;
  border-radius: 50%;
  background: #222;
}
.r-first {
  width: 96px;
}
.r-second {
  width: 72px;
}
.showname-row {
  height: 20px;
  margin-top: 15px;
}
.showname-row .check {
  margin-right: 4px;
}
.description {
  flex: 1;
  border-bottom: 0;
}

.marks {
  position: absolute;
  left: 0;
  top: 0;
  width: 1789px;
  height: 923px;
  pointer-events: none;
}
.mark-box {
  fill: none;
  stroke: #ee2a1c;
  stroke-width: 4;
}
.watermark {
  position: absolute;
  left: 1454px;
  top: 817px;
  display: flex;
  align-items: center;
  gap: 22px;
  color: #bfbfbf;
  text-shadow: 1px 1px 0 rgba(255, 255, 255, 0.7), 0 2px 3px rgba(120, 120, 120, 0.4);
  opacity: 0.85;
  pointer-events: none;
}
.wm-cn {
  font-family: "Noto Sans CJK SC", sans-serif;
  font-size: 54px;
  line-height: 56px;
}
.wm-en {
  font-family: "Open Sans", sans-serif;
  font-size: 53px;
  line-height: 56px;
}
</style>
